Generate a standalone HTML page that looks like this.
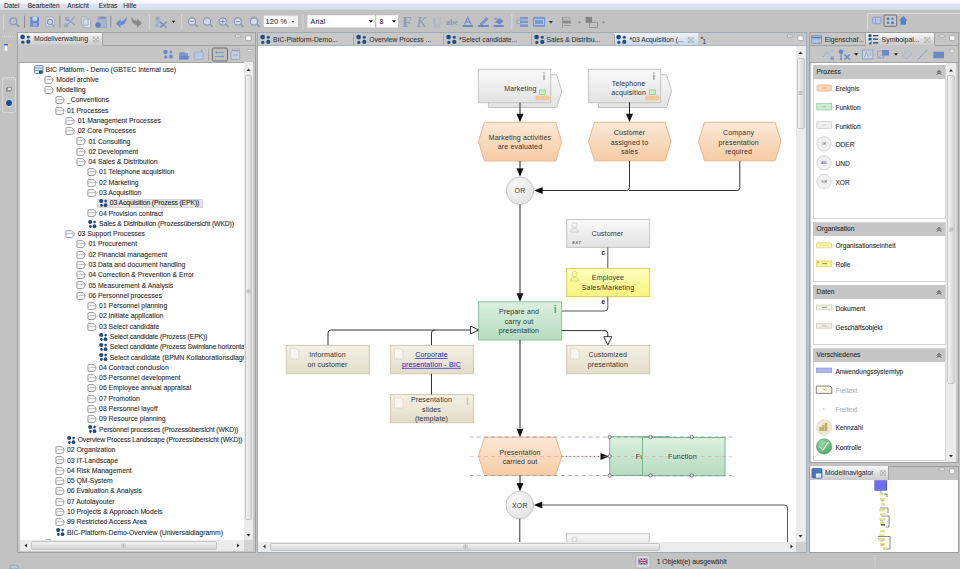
<!DOCTYPE html><html><head><meta charset="utf-8"><style>
*{margin:0;padding:0;box-sizing:border-box}
html,body{width:960px;height:569px;overflow:hidden;background:#c2c2c2;font-family:"Liberation Sans",sans-serif;color:#222}
.abs{position:absolute}
.t{position:absolute;white-space:nowrap;line-height:1;-webkit-text-stroke-width:0.09px}
svg{position:absolute;overflow:visible}
</style></head><body>
<div class="abs" style="left:0;top:0;width:960px;height:10px;background:linear-gradient(#fdfeff,#f4f6fb 30%,#dfe2f1 45%,#d9ddef 90%,#cfd2dc)"></div>
<div class="t" style="left:4px;top:2.8px;font-size:6.6px;color:#2a2a2a;-webkit-text-stroke-width:0.05px">Datei</div>
<div class="t" style="left:27.7px;top:2.8px;font-size:6.6px;color:#2a2a2a;-webkit-text-stroke-width:0.05px">Bearbeiten</div>
<div class="t" style="left:67.3px;top:2.8px;font-size:6.6px;color:#2a2a2a;-webkit-text-stroke-width:0.05px">Ansicht</div>
<div class="t" style="left:98.7px;top:2.8px;font-size:6.6px;color:#2a2a2a;-webkit-text-stroke-width:0.05px">Extras</div>
<div class="t" style="left:123.3px;top:2.8px;font-size:6.6px;color:#2a2a2a;-webkit-text-stroke-width:0.05px">Hilfe</div>
<div class="abs" style="left:0;top:10px;width:960px;height:22px;background:#c2c2c2"></div>
<svg style="left:0;top:0" width="960" height="34" viewBox="0 0 960 34"><path d="M3.6 14.5 V30" stroke="#eeeeee" stroke-width="1" stroke-dasharray="1 1.2"/><path d="M149.4 14.5 V30" stroke="#eeeeee" stroke-width="1" stroke-dasharray="1 1.2"/><path d="M181.7 14.5 V30" stroke="#eeeeee" stroke-width="1" stroke-dasharray="1 1.2"/><path d="M303 14.5 V30" stroke="#eeeeee" stroke-width="1" stroke-dasharray="1 1.2"/><path d="M511.9 14.5 V30" stroke="#eeeeee" stroke-width="1" stroke-dasharray="1 1.2"/><path d="M24.5 15.7 V27.7" stroke="#8a8a8a" stroke-width="0.9"/><path d="M59.9 15.7 V27.7" stroke="#8a8a8a" stroke-width="0.9"/><path d="M110.8 15.7 V27.7" stroke="#8a8a8a" stroke-width="0.9"/><circle cx="13.4" cy="21.3" r="3.4" fill="none" stroke="#8d9ab5" stroke-width="1.3"/><path d="M15.8 23.8 L19.3 26.6" stroke="#8d9ab5" stroke-width="1.8"/><path d="M30.2 16.8 H39 V26.7 H30.2 Z" fill="#6c8ccc"/><rect x="32.5" y="17" width="4.6" height="3.6" fill="#c8d4ec"/><rect x="33" y="23" width="4" height="3" fill="#90a8d8"/><path d="M45.8 16.8 H52 L54.7 19.5 V26.7 H45.8 Z" fill="#d4d8e0" stroke="#9aa6c0" stroke-width="0.7"/><circle cx="50" cy="22" r="2.6" fill="none" stroke="#8a98b8" stroke-width="1.1"/><path d="M51.8 24 L54.2 26.6" stroke="#8a98b8" stroke-width="1.2"/><path d="M66 26 L74.5 17 M66 18.5 L75 25" stroke="#8fa0c8" stroke-width="1.1"/><circle cx="66" cy="25.5" r="1.6" fill="none" stroke="#8fa0c8" stroke-width="1"/><circle cx="67" cy="19" r="1.6" fill="none" stroke="#8fa0c8" stroke-width="1"/><path d="M81.3 17 H87 L88 18 V25 H81.3 Z M83.3 19 H89 L90.6 20.6 V27.7 H83.3 Z" fill="#d8dce4" stroke="#9ca8bc" stroke-width="0.8"/><rect x="98" y="17" width="8.7" height="10.5" fill="#a8b4c8" stroke="#8c9ab4" stroke-width="0.6"/><rect x="99.5" y="16.8" width="6" height="2.2" fill="#7890c0"/><circle cx="98" cy="25" r="2.7" fill="#5a80c8"/><path d="M116 23.5 L120.5 19 V21.5 Q124 21 127 16.8 Q126.5 25 120.5 25.5 V28 Z" fill="#6a8cd0"/><path d="M142 23 L137 18.5 V21 Q133.5 20.5 131 17 Q132 25 137 25 V27.8 Z" fill="#8a8a8a"/><g opacity="0.85"><rect x="155.5" y="16.8" width="4" height="3" fill="#8aa0c8"/><rect x="156" y="20.5" width="5" height="3" fill="#9ab0d0"/><rect x="155" y="24" width="3.5" height="3" fill="#9ab0d0"/><path d="M160 22 L166.5 27.5 M166.5 22 L160 27.5" stroke="#6a88c0" stroke-width="1.6"/></g><path d="M171.8 20.7 H175.2 L173.5 22.9 Z" fill="#111"/><circle cx="192" cy="21.5" r="3.6" fill="#d8dcea" stroke="#8d9ab5" stroke-width="1.2"/><path d="M194.6 24 L197.8 26.9" stroke="#8d9ab5" stroke-width="1.6"/><path d="M189.8 21.5 H194.2" stroke="#8d9ab5" stroke-width="1"/><circle cx="207" cy="21.5" r="3.6" fill="#d8dcea" stroke="#8d9ab5" stroke-width="1.2"/><path d="M209.6 24 L212.8 26.9" stroke="#8d9ab5" stroke-width="1.6"/><rect x="203" y="17" width="4" height="3" fill="none" stroke="#aab" stroke-width="0.5"/><circle cx="222.75" cy="21.5" r="3.6" fill="#d8dcea" stroke="#8d9ab5" stroke-width="1.2"/><path d="M225.35 24 L228.55 26.9" stroke="#8d9ab5" stroke-width="1.6"/><path d="M220.7 21.5 H224.7 M222.7 19.5 V23.5" stroke="#7d8aa5" stroke-width="1"/><circle cx="237.75" cy="21.5" r="3.6" fill="#d8dcea" stroke="#8d9ab5" stroke-width="1.2"/><path d="M240.35 24 L243.55 26.9" stroke="#8d9ab5" stroke-width="1.6"/><path d="M235.7 21.5 H239.7" stroke="#7d8aa5" stroke-width="1"/><circle cx="254" cy="21.5" r="3.6" fill="#d8dcea" stroke="#8d9ab5" stroke-width="1.2"/><path d="M256.6 24 L259.8 26.9" stroke="#8d9ab5" stroke-width="1.6"/><text x="254" y="19" font-size="3.5" fill="#99a" text-anchor="middle" font-family="Liberation Sans">100</text><rect x="263.75" y="15.6" width="24.5" height="11.3" fill="#fff"/><rect x="288" y="15.6" width="10" height="11.3" fill="#f0f0f0"/><path d="M291.5 21.3 H294.5 L293 22.8 Z" fill="#222"/><rect x="307.5" y="15.25" width="67.5" height="12.25" fill="#fff"/><path d="M368.75 20.3 H373 L370.9 22.8 Z" fill="#111"/><rect x="376.25" y="15.25" width="21.75" height="12.25" fill="#fff"/><path d="M392 20.3 H396 L394 22.8 Z" fill="#111"/><text x="402.3" y="26.9" font-family="Liberation Serif" font-weight="bold" font-size="15.5" fill="#8a9ab8">F</text><text x="416.5" y="26.9" font-family="Liberation Serif" font-style="italic" font-size="15" fill="#8a9ab8">K</text><text x="432.3" y="26" font-family="Liberation Serif" font-size="13" fill="#a4aec4">U</text><path d="M433 27.2 H441" stroke="#a4aec4" stroke-width="0.7"/><text x="446" y="25" font-family="Liberation Serif" font-weight="bold" font-size="8" fill="#8a9ab8">abc</text><path d="M446 22.4 H458" stroke="#8a9ab8" stroke-width="0.6"/><path d="M464.5 24.3 L467.75 17.3 L471 24.3 M465.6 22 H469.9" fill="none" stroke="#7088c0" stroke-width="1.1"/><rect x="462.5" y="25" width="10.5" height="2" fill="#6a88c8"/><path d="M479.5 24 L486.5 17 L488.5 19 L481.5 26 Z" fill="#7890c8"/><rect x="478" y="25" width="10.75" height="2" fill="#6a88c8"/><path d="M495 22 L499 18 L503.5 21 L500 24.5 Z" fill="#6a88c8"/><path d="M497 19 Q495 17.5 494.5 20" stroke="#6a88c8" fill="none" stroke-width="1"/><rect x="493.75" y="25" width="10" height="2" fill="#6a88c8"/><rect x="520" y="16.9" width="8" height="2.5" fill="#7a98d0"/><rect x="520" y="20.6" width="8" height="2.5" fill="#7a98d0"/><rect x="520" y="24.4" width="8" height="2.5" fill="#7a98d0"/><rect x="517" y="20" width="3.5" height="3.5" fill="none" stroke="#7a98d0" stroke-width="0.6"/><rect x="533" y="16.9" width="12" height="10" fill="#7a98d0"/><rect x="534.5" y="19.5" width="9" height="5" fill="none" stroke="#c0d0f0" stroke-width="0.8"/><path d="M548.75 21.3 H553 L550.9 23.3 Z" fill="#111"/><rect x="563" y="17.5" width="7" height="2.5" fill="none" stroke="#999" stroke-width="0.6"/><rect x="563" y="20.8" width="8" height="2.6" fill="#888"/><path d="M563 25.5 H571 M562.5 17 V28" stroke="#888" stroke-width="0.7"/><path d="M578 21.7 H581 L579.5 23.2 Z" fill="#777"/><rect x="585.6" y="16.9" width="6.5" height="6" fill="#858585"/><rect x="589.5" y="22.3" width="8" height="5.2" fill="none" stroke="#888" stroke-width="0.8"/><path d="M602 21.7 H605 L603.5 23.2 Z" fill="#777"/><path d="M867.5 13.5 V30 M867.5 13.5 H960" stroke="#e2e2e2" stroke-width="0.8"/><rect x="872.5" y="17.2" width="8.5" height="6.6" rx="1.2" fill="#b8c4e0" stroke="#8090c0" stroke-width="0.8"/><path d="M875.5 17.5 V23.5" stroke="#8090c0" stroke-width="0.8"/><rect x="884" y="15" width="12.7" height="11.3" rx="1" fill="#c8c8c8" stroke="#666" stroke-width="0.9"/><circle cx="888" cy="18.7" r="1.5" fill="#5a7ac0"/><circle cx="892.5" cy="18.7" r="1.2" fill="#5a7ac0"/><circle cx="888" cy="22.8" r="1.3" fill="#5a7ac0"/><circle cx="892.5" cy="22.8" r="1.5" fill="#5a7ac0"/><path d="M899 20.5 L903.2 16 L907.5 20.5 H906 V24.7 H900.5 V20.5 Z" fill="#5a80c8"/></svg>
<div class="t" style="left:265.6px;top:17.6px;font-size:7.6px;color:#222;-webkit-text-stroke-width:0.03px">120 %</div>
<div class="t" style="left:310.6px;top:17.8px;font-size:7.2px;color:#222;-webkit-text-stroke-width:0.03px">Arial</div>
<div class="t" style="left:379.4px;top:17.8px;font-size:7.2px;color:#222;-webkit-text-stroke-width:0.03px">8</div>
<div class="abs" style="left:2px;top:77px;width:14px;height:36px;border:1px solid #d8d8d8;border-radius:2px"></div>
<div class="abs" style="left:5.5px;top:100px;width:6px;height:6px;border-radius:50%;background:#1f4f8a;box-shadow:0 0 1.5px 1px #c8d8ec"></div>
<div class="abs" style="left:17px;top:32px;width:239px;height:521px;border:1px solid #a0a0a0;background:#c6c6c6"></div>
<div class="abs" style="left:18px;top:33px;width:85px;height:12px;background:linear-gradient(#f8f8f8,#cbcbcb);border-right:1px solid #a0a0a0"></div>
<div class="abs" style="left:103px;top:45px;width:152px;height:1px;background:#a0a0a0"></div>
<div class="t" style="left:34px;top:36.2px;font-size:6.95px;color:#333;-webkit-text-stroke-width:0.06px">Modellverwaltung</div>
<div class="abs" style="left:19px;top:62px;width:235px;height:1px;background:#a4a4a4"></div><div class="abs" style="left:20px;top:63px;width:233px;height:478px;background:#fff"></div>
<div class="abs" style="left:20px;top:62px;width:224px;height:478px;overflow:hidden">
<svg style="left:13.6px;top:3.0px" width="10" height="9" viewBox="0 0 10 9"><rect x="0.5" y="0.5" width="8.5" height="8" rx="1" fill="#dfe8f0" stroke="#5b82a8" stroke-width="0.9"/><path d="M0.8 3h8M0.8 5.5h8" stroke="#5b82a8" stroke-width="0.8"/><rect x="5" y="5.8" width="3.5" height="2.5" fill="#1f4f8a"/></svg>
<div class="t" style="left:25.6px;top:4.5px;font-size:6.85px;color:#2a2a2a;letter-spacing:0">BIC Platform - Demo (GBTEC internal use)</div>
<svg style="left:23.9px;top:13.6px" width="10" height="8" viewBox="0 0 10 8"><path d="M0.9 1.8 Q0.9 0.6 2.1 0.6 H6.4 Q7.2 0.6 7.8 1.6 L9.2 3.6 Q8.6 6 7.6 7.1 Q7.2 7.5 6.4 7.5 H2.1 Q0.9 7.5 0.9 6.3 Z" fill="#f8f8fa" stroke="#8a8c94" stroke-width="0.85"/><path d="M1.2 4.6 Q2 3.5 3.5 3.5 H9" fill="none" stroke="#9a9ea8" stroke-width="0.6"/></svg>
<div class="t" style="left:36.3px;top:14.7px;font-size:6.85px;color:#2a2a2a;letter-spacing:0">Model archive</div>
<svg style="left:23.9px;top:23.9px" width="10" height="8" viewBox="0 0 10 8"><path d="M0.9 1.8 Q0.9 0.6 2.1 0.6 H6.4 Q7.2 0.6 7.8 1.6 L9.2 3.6 Q8.6 6 7.6 7.1 Q7.2 7.5 6.4 7.5 H2.1 Q0.9 7.5 0.9 6.3 Z" fill="#f8f8fa" stroke="#8a8c94" stroke-width="0.85"/><path d="M1.2 4.6 Q2 3.5 3.5 3.5 H9" fill="none" stroke="#9a9ea8" stroke-width="0.6"/></svg>
<div class="t" style="left:36.3px;top:25.0px;font-size:6.85px;color:#2a2a2a;letter-spacing:0">Modelling</div>
<svg style="left:34.6px;top:34.2px" width="10" height="8" viewBox="0 0 10 8"><path d="M0.9 1.8 Q0.9 0.6 2.1 0.6 H6.4 Q7.2 0.6 7.8 1.6 L9.2 3.6 Q8.6 6 7.6 7.1 Q7.2 7.5 6.4 7.5 H2.1 Q0.9 7.5 0.9 6.3 Z" fill="#f8f8fa" stroke="#8a8c94" stroke-width="0.85"/><path d="M1.2 4.6 Q2 3.5 3.5 3.5 H9" fill="none" stroke="#9a9ea8" stroke-width="0.6"/></svg>
<div class="t" style="left:47.0px;top:35.3px;font-size:6.85px;color:#2a2a2a;letter-spacing:0">_Conventions</div>
<svg style="left:34.6px;top:44.5px" width="10" height="8" viewBox="0 0 10 8"><path d="M0.9 1.8 Q0.9 0.6 2.1 0.6 H6.4 Q7.2 0.6 7.8 1.6 L9.2 3.6 Q8.6 6 7.6 7.1 Q7.2 7.5 6.4 7.5 H2.1 Q0.9 7.5 0.9 6.3 Z" fill="#f8f8fa" stroke="#8a8c94" stroke-width="0.85"/><path d="M1.2 4.6 Q2 3.5 3.5 3.5 H9" fill="none" stroke="#9a9ea8" stroke-width="0.6"/></svg>
<div class="t" style="left:47.0px;top:45.6px;font-size:6.85px;color:#2a2a2a;letter-spacing:0">01 Processes</div>
<svg style="left:45.3px;top:54.7px" width="10" height="8" viewBox="0 0 10 8"><path d="M0.9 1.8 Q0.9 0.6 2.1 0.6 H6.4 Q7.2 0.6 7.8 1.6 L9.2 3.6 Q8.6 6 7.6 7.1 Q7.2 7.5 6.4 7.5 H2.1 Q0.9 7.5 0.9 6.3 Z" fill="#f8f8fa" stroke="#8a8c94" stroke-width="0.85"/><path d="M1.2 4.6 Q2 3.5 3.5 3.5 H9" fill="none" stroke="#9a9ea8" stroke-width="0.6"/></svg>
<div class="t" style="left:57.7px;top:55.9px;font-size:6.85px;color:#2a2a2a;letter-spacing:0">01 Management Processes</div>
<svg style="left:45.3px;top:65.0px" width="10" height="8" viewBox="0 0 10 8"><path d="M0.9 1.8 Q0.9 0.6 2.1 0.6 H6.4 Q7.2 0.6 7.8 1.6 L9.2 3.6 Q8.6 6 7.6 7.1 Q7.2 7.5 6.4 7.5 H2.1 Q0.9 7.5 0.9 6.3 Z" fill="#f8f8fa" stroke="#8a8c94" stroke-width="0.85"/><path d="M1.2 4.6 Q2 3.5 3.5 3.5 H9" fill="none" stroke="#9a9ea8" stroke-width="0.6"/></svg>
<div class="t" style="left:57.7px;top:66.2px;font-size:6.85px;color:#2a2a2a;letter-spacing:0">02 Core Processes</div>
<svg style="left:56.0px;top:75.3px" width="10" height="8" viewBox="0 0 10 8"><path d="M0.9 1.8 Q0.9 0.6 2.1 0.6 H6.4 Q7.2 0.6 7.8 1.6 L9.2 3.6 Q8.6 6 7.6 7.1 Q7.2 7.5 6.4 7.5 H2.1 Q0.9 7.5 0.9 6.3 Z" fill="#f8f8fa" stroke="#8a8c94" stroke-width="0.85"/><path d="M1.2 4.6 Q2 3.5 3.5 3.5 H9" fill="none" stroke="#9a9ea8" stroke-width="0.6"/></svg>
<div class="t" style="left:68.4px;top:76.5px;font-size:6.85px;color:#2a2a2a;letter-spacing:0">01 Consulting</div>
<svg style="left:56.0px;top:85.6px" width="10" height="8" viewBox="0 0 10 8"><path d="M0.9 1.8 Q0.9 0.6 2.1 0.6 H6.4 Q7.2 0.6 7.8 1.6 L9.2 3.6 Q8.6 6 7.6 7.1 Q7.2 7.5 6.4 7.5 H2.1 Q0.9 7.5 0.9 6.3 Z" fill="#f8f8fa" stroke="#8a8c94" stroke-width="0.85"/><path d="M1.2 4.6 Q2 3.5 3.5 3.5 H9" fill="none" stroke="#9a9ea8" stroke-width="0.6"/></svg>
<div class="t" style="left:68.4px;top:86.8px;font-size:6.85px;color:#2a2a2a;letter-spacing:0">02 Development</div>
<svg style="left:56.0px;top:95.9px" width="10" height="8" viewBox="0 0 10 8"><path d="M0.9 1.8 Q0.9 0.6 2.1 0.6 H6.4 Q7.2 0.6 7.8 1.6 L9.2 3.6 Q8.6 6 7.6 7.1 Q7.2 7.5 6.4 7.5 H2.1 Q0.9 7.5 0.9 6.3 Z" fill="#f8f8fa" stroke="#8a8c94" stroke-width="0.85"/><path d="M1.2 4.6 Q2 3.5 3.5 3.5 H9" fill="none" stroke="#9a9ea8" stroke-width="0.6"/></svg>
<div class="t" style="left:68.4px;top:97.1px;font-size:6.85px;color:#2a2a2a;letter-spacing:0">04 Sales &amp; Distribution</div>
<svg style="left:66.7px;top:106.2px" width="10" height="8" viewBox="0 0 10 8"><path d="M0.9 1.8 Q0.9 0.6 2.1 0.6 H6.4 Q7.2 0.6 7.8 1.6 L9.2 3.6 Q8.6 6 7.6 7.1 Q7.2 7.5 6.4 7.5 H2.1 Q0.9 7.5 0.9 6.3 Z" fill="#f8f8fa" stroke="#8a8c94" stroke-width="0.85"/><path d="M1.2 4.6 Q2 3.5 3.5 3.5 H9" fill="none" stroke="#9a9ea8" stroke-width="0.6"/></svg>
<div class="t" style="left:79.1px;top:107.3px;font-size:6.85px;color:#2a2a2a;letter-spacing:0">01 Telephone acquisition</div>
<svg style="left:66.7px;top:116.5px" width="10" height="8" viewBox="0 0 10 8"><path d="M0.9 1.8 Q0.9 0.6 2.1 0.6 H6.4 Q7.2 0.6 7.8 1.6 L9.2 3.6 Q8.6 6 7.6 7.1 Q7.2 7.5 6.4 7.5 H2.1 Q0.9 7.5 0.9 6.3 Z" fill="#f8f8fa" stroke="#8a8c94" stroke-width="0.85"/><path d="M1.2 4.6 Q2 3.5 3.5 3.5 H9" fill="none" stroke="#9a9ea8" stroke-width="0.6"/></svg>
<div class="t" style="left:79.1px;top:117.6px;font-size:6.85px;color:#2a2a2a;letter-spacing:0">02 Marketing</div>
<svg style="left:66.7px;top:126.8px" width="10" height="8" viewBox="0 0 10 8"><path d="M0.9 1.8 Q0.9 0.6 2.1 0.6 H6.4 Q7.2 0.6 7.8 1.6 L9.2 3.6 Q8.6 6 7.6 7.1 Q7.2 7.5 6.4 7.5 H2.1 Q0.9 7.5 0.9 6.3 Z" fill="#f8f8fa" stroke="#8a8c94" stroke-width="0.85"/><path d="M1.2 4.6 Q2 3.5 3.5 3.5 H9" fill="none" stroke="#9a9ea8" stroke-width="0.6"/></svg>
<div class="t" style="left:79.1px;top:127.9px;font-size:6.85px;color:#2a2a2a;letter-spacing:0">03 Acquisition</div>
<div class="abs" style="left:76.8px;top:136.7px;width:106px;height:9px;background:#e4e4e4;border:1px solid #d8d8d8"></div>
<svg style="left:78.8px;top:137.1px" width="9" height="8.5" viewBox="0 0 9 8.5"><circle cx="2.2" cy="2.0" r="2.1" fill="#1f4a80"/><circle cx="6.6" cy="2.1" r="1.3" fill="#1f4a80"/><circle cx="2.4" cy="6.5" r="1.4" fill="#1f4a80"/><circle cx="6.5" cy="6.2" r="1.9" fill="#1f4a80"/></svg>
<div class="t" style="left:89.8px;top:138.2px;font-size:6.85px;color:#2a2a2a;letter-spacing:-0.14px">03 Acquisition (Prozess (EPK))</div>
<svg style="left:66.7px;top:147.4px" width="10" height="8" viewBox="0 0 10 8"><path d="M0.9 1.8 Q0.9 0.6 2.1 0.6 H6.4 Q7.2 0.6 7.8 1.6 L9.2 3.6 Q8.6 6 7.6 7.1 Q7.2 7.5 6.4 7.5 H2.1 Q0.9 7.5 0.9 6.3 Z" fill="#f8f8fa" stroke="#8a8c94" stroke-width="0.85"/><path d="M1.2 4.6 Q2 3.5 3.5 3.5 H9" fill="none" stroke="#9a9ea8" stroke-width="0.6"/></svg>
<div class="t" style="left:79.1px;top:148.5px;font-size:6.85px;color:#2a2a2a;letter-spacing:0">04 Provision contract</div>
<svg style="left:68.1px;top:157.7px" width="9" height="8.5" viewBox="0 0 9 8.5"><circle cx="2.2" cy="2.0" r="2.1" fill="#1f4a80"/><circle cx="6.6" cy="2.1" r="1.3" fill="#1f4a80"/><circle cx="2.4" cy="6.5" r="1.4" fill="#1f4a80"/><circle cx="6.5" cy="6.2" r="1.9" fill="#1f4a80"/></svg>
<div class="t" style="left:79.1px;top:158.8px;font-size:6.85px;color:#2a2a2a;letter-spacing:-0.14px">Sales &amp; Distribution (Prozessübersicht (WKD))</div>
<svg style="left:45.3px;top:167.9px" width="10" height="8" viewBox="0 0 10 8"><path d="M0.9 1.8 Q0.9 0.6 2.1 0.6 H6.4 Q7.2 0.6 7.8 1.6 L9.2 3.6 Q8.6 6 7.6 7.1 Q7.2 7.5 6.4 7.5 H2.1 Q0.9 7.5 0.9 6.3 Z" fill="#f8f8fa" stroke="#8a8c94" stroke-width="0.85"/><path d="M1.2 4.6 Q2 3.5 3.5 3.5 H9" fill="none" stroke="#9a9ea8" stroke-width="0.6"/></svg>
<div class="t" style="left:57.7px;top:169.1px;font-size:6.85px;color:#2a2a2a;letter-spacing:0">03 Support Processes</div>
<svg style="left:56.0px;top:178.2px" width="10" height="8" viewBox="0 0 10 8"><path d="M0.9 1.8 Q0.9 0.6 2.1 0.6 H6.4 Q7.2 0.6 7.8 1.6 L9.2 3.6 Q8.6 6 7.6 7.1 Q7.2 7.5 6.4 7.5 H2.1 Q0.9 7.5 0.9 6.3 Z" fill="#f8f8fa" stroke="#8a8c94" stroke-width="0.85"/><path d="M1.2 4.6 Q2 3.5 3.5 3.5 H9" fill="none" stroke="#9a9ea8" stroke-width="0.6"/></svg>
<div class="t" style="left:68.4px;top:179.4px;font-size:6.85px;color:#2a2a2a;letter-spacing:0">01 Procurement</div>
<svg style="left:56.0px;top:188.5px" width="10" height="8" viewBox="0 0 10 8"><path d="M0.9 1.8 Q0.9 0.6 2.1 0.6 H6.4 Q7.2 0.6 7.8 1.6 L9.2 3.6 Q8.6 6 7.6 7.1 Q7.2 7.5 6.4 7.5 H2.1 Q0.9 7.5 0.9 6.3 Z" fill="#f8f8fa" stroke="#8a8c94" stroke-width="0.85"/><path d="M1.2 4.6 Q2 3.5 3.5 3.5 H9" fill="none" stroke="#9a9ea8" stroke-width="0.6"/></svg>
<div class="t" style="left:68.4px;top:189.7px;font-size:6.85px;color:#2a2a2a;letter-spacing:0">02 Financial management</div>
<svg style="left:56.0px;top:198.8px" width="10" height="8" viewBox="0 0 10 8"><path d="M0.9 1.8 Q0.9 0.6 2.1 0.6 H6.4 Q7.2 0.6 7.8 1.6 L9.2 3.6 Q8.6 6 7.6 7.1 Q7.2 7.5 6.4 7.5 H2.1 Q0.9 7.5 0.9 6.3 Z" fill="#f8f8fa" stroke="#8a8c94" stroke-width="0.85"/><path d="M1.2 4.6 Q2 3.5 3.5 3.5 H9" fill="none" stroke="#9a9ea8" stroke-width="0.6"/></svg>
<div class="t" style="left:68.4px;top:200.0px;font-size:6.85px;color:#2a2a2a;letter-spacing:0">03 Data and document handling</div>
<svg style="left:56.0px;top:209.1px" width="10" height="8" viewBox="0 0 10 8"><path d="M0.9 1.8 Q0.9 0.6 2.1 0.6 H6.4 Q7.2 0.6 7.8 1.6 L9.2 3.6 Q8.6 6 7.6 7.1 Q7.2 7.5 6.4 7.5 H2.1 Q0.9 7.5 0.9 6.3 Z" fill="#f8f8fa" stroke="#8a8c94" stroke-width="0.85"/><path d="M1.2 4.6 Q2 3.5 3.5 3.5 H9" fill="none" stroke="#9a9ea8" stroke-width="0.6"/></svg>
<div class="t" style="left:68.4px;top:210.2px;font-size:6.85px;color:#2a2a2a;letter-spacing:0">04 Correction &amp; Prevention &amp; Error</div>
<svg style="left:56.0px;top:219.4px" width="10" height="8" viewBox="0 0 10 8"><path d="M0.9 1.8 Q0.9 0.6 2.1 0.6 H6.4 Q7.2 0.6 7.8 1.6 L9.2 3.6 Q8.6 6 7.6 7.1 Q7.2 7.5 6.4 7.5 H2.1 Q0.9 7.5 0.9 6.3 Z" fill="#f8f8fa" stroke="#8a8c94" stroke-width="0.85"/><path d="M1.2 4.6 Q2 3.5 3.5 3.5 H9" fill="none" stroke="#9a9ea8" stroke-width="0.6"/></svg>
<div class="t" style="left:68.4px;top:220.5px;font-size:6.85px;color:#2a2a2a;letter-spacing:0">05 Measurement &amp; Analysis</div>
<svg style="left:56.0px;top:229.7px" width="10" height="8" viewBox="0 0 10 8"><path d="M0.9 1.8 Q0.9 0.6 2.1 0.6 H6.4 Q7.2 0.6 7.8 1.6 L9.2 3.6 Q8.6 6 7.6 7.1 Q7.2 7.5 6.4 7.5 H2.1 Q0.9 7.5 0.9 6.3 Z" fill="#f8f8fa" stroke="#8a8c94" stroke-width="0.85"/><path d="M1.2 4.6 Q2 3.5 3.5 3.5 H9" fill="none" stroke="#9a9ea8" stroke-width="0.6"/></svg>
<div class="t" style="left:68.4px;top:230.8px;font-size:6.85px;color:#2a2a2a;letter-spacing:0">06 Personnel processes</div>
<svg style="left:66.7px;top:240.0px" width="10" height="8" viewBox="0 0 10 8"><path d="M0.9 1.8 Q0.9 0.6 2.1 0.6 H6.4 Q7.2 0.6 7.8 1.6 L9.2 3.6 Q8.6 6 7.6 7.1 Q7.2 7.5 6.4 7.5 H2.1 Q0.9 7.5 0.9 6.3 Z" fill="#f8f8fa" stroke="#8a8c94" stroke-width="0.85"/><path d="M1.2 4.6 Q2 3.5 3.5 3.5 H9" fill="none" stroke="#9a9ea8" stroke-width="0.6"/></svg>
<div class="t" style="left:79.1px;top:241.1px;font-size:6.85px;color:#2a2a2a;letter-spacing:0">01 Personnel planning</div>
<svg style="left:66.7px;top:250.3px" width="10" height="8" viewBox="0 0 10 8"><path d="M0.9 1.8 Q0.9 0.6 2.1 0.6 H6.4 Q7.2 0.6 7.8 1.6 L9.2 3.6 Q8.6 6 7.6 7.1 Q7.2 7.5 6.4 7.5 H2.1 Q0.9 7.5 0.9 6.3 Z" fill="#f8f8fa" stroke="#8a8c94" stroke-width="0.85"/><path d="M1.2 4.6 Q2 3.5 3.5 3.5 H9" fill="none" stroke="#9a9ea8" stroke-width="0.6"/></svg>
<div class="t" style="left:79.1px;top:251.4px;font-size:6.85px;color:#2a2a2a;letter-spacing:0">02 Initiate application</div>
<svg style="left:66.7px;top:260.6px" width="10" height="8" viewBox="0 0 10 8"><path d="M0.9 1.8 Q0.9 0.6 2.1 0.6 H6.4 Q7.2 0.6 7.8 1.6 L9.2 3.6 Q8.6 6 7.6 7.1 Q7.2 7.5 6.4 7.5 H2.1 Q0.9 7.5 0.9 6.3 Z" fill="#f8f8fa" stroke="#8a8c94" stroke-width="0.85"/><path d="M1.2 4.6 Q2 3.5 3.5 3.5 H9" fill="none" stroke="#9a9ea8" stroke-width="0.6"/></svg>
<div class="t" style="left:79.1px;top:261.7px;font-size:6.85px;color:#2a2a2a;letter-spacing:0">03 Select candidate</div>
<svg style="left:78.8px;top:270.8px" width="9" height="8.5" viewBox="0 0 9 8.5"><circle cx="2.2" cy="2.0" r="2.1" fill="#1f4a80"/><circle cx="6.6" cy="2.1" r="1.3" fill="#1f4a80"/><circle cx="2.4" cy="6.5" r="1.4" fill="#1f4a80"/><circle cx="6.5" cy="6.2" r="1.9" fill="#1f4a80"/></svg>
<div class="t" style="left:89.8px;top:272.0px;font-size:6.85px;color:#2a2a2a;letter-spacing:-0.14px">Select candidate (Prozess (EPK))</div>
<svg style="left:78.8px;top:281.1px" width="9" height="8.5" viewBox="0 0 9 8.5"><circle cx="2.2" cy="2.0" r="2.1" fill="#1f4a80"/><circle cx="6.6" cy="2.1" r="1.3" fill="#1f4a80"/><circle cx="2.4" cy="6.5" r="1.4" fill="#1f4a80"/><circle cx="6.5" cy="6.2" r="1.9" fill="#1f4a80"/></svg>
<div class="t" style="left:89.8px;top:282.3px;font-size:6.85px;color:#2a2a2a;letter-spacing:-0.14px">Select candidate (Prozess Swimlane horizontal)</div>
<svg style="left:78.8px;top:291.4px" width="9" height="8.5" viewBox="0 0 9 8.5"><circle cx="2.2" cy="2.0" r="2.1" fill="#1f4a80"/><circle cx="6.6" cy="2.1" r="1.3" fill="#1f4a80"/><circle cx="2.4" cy="6.5" r="1.4" fill="#1f4a80"/><circle cx="6.5" cy="6.2" r="1.9" fill="#1f4a80"/></svg>
<div class="t" style="left:89.8px;top:292.6px;font-size:6.85px;color:#2a2a2a;letter-spacing:0">Select candidate (BPMN Kollaborationsdiagramm)</div>
<svg style="left:66.7px;top:301.7px" width="10" height="8" viewBox="0 0 10 8"><path d="M0.9 1.8 Q0.9 0.6 2.1 0.6 H6.4 Q7.2 0.6 7.8 1.6 L9.2 3.6 Q8.6 6 7.6 7.1 Q7.2 7.5 6.4 7.5 H2.1 Q0.9 7.5 0.9 6.3 Z" fill="#f8f8fa" stroke="#8a8c94" stroke-width="0.85"/><path d="M1.2 4.6 Q2 3.5 3.5 3.5 H9" fill="none" stroke="#9a9ea8" stroke-width="0.6"/></svg>
<div class="t" style="left:79.1px;top:302.9px;font-size:6.85px;color:#2a2a2a;letter-spacing:0">04 Contract conclusion</div>
<svg style="left:66.7px;top:312.0px" width="10" height="8" viewBox="0 0 10 8"><path d="M0.9 1.8 Q0.9 0.6 2.1 0.6 H6.4 Q7.2 0.6 7.8 1.6 L9.2 3.6 Q8.6 6 7.6 7.1 Q7.2 7.5 6.4 7.5 H2.1 Q0.9 7.5 0.9 6.3 Z" fill="#f8f8fa" stroke="#8a8c94" stroke-width="0.85"/><path d="M1.2 4.6 Q2 3.5 3.5 3.5 H9" fill="none" stroke="#9a9ea8" stroke-width="0.6"/></svg>
<div class="t" style="left:79.1px;top:313.1px;font-size:6.85px;color:#2a2a2a;letter-spacing:0">05 Personnel development</div>
<svg style="left:66.7px;top:322.3px" width="10" height="8" viewBox="0 0 10 8"><path d="M0.9 1.8 Q0.9 0.6 2.1 0.6 H6.4 Q7.2 0.6 7.8 1.6 L9.2 3.6 Q8.6 6 7.6 7.1 Q7.2 7.5 6.4 7.5 H2.1 Q0.9 7.5 0.9 6.3 Z" fill="#f8f8fa" stroke="#8a8c94" stroke-width="0.85"/><path d="M1.2 4.6 Q2 3.5 3.5 3.5 H9" fill="none" stroke="#9a9ea8" stroke-width="0.6"/></svg>
<div class="t" style="left:79.1px;top:323.4px;font-size:6.85px;color:#2a2a2a;letter-spacing:0">06 Employee annual appraisal</div>
<svg style="left:66.7px;top:332.6px" width="10" height="8" viewBox="0 0 10 8"><path d="M0.9 1.8 Q0.9 0.6 2.1 0.6 H6.4 Q7.2 0.6 7.8 1.6 L9.2 3.6 Q8.6 6 7.6 7.1 Q7.2 7.5 6.4 7.5 H2.1 Q0.9 7.5 0.9 6.3 Z" fill="#f8f8fa" stroke="#8a8c94" stroke-width="0.85"/><path d="M1.2 4.6 Q2 3.5 3.5 3.5 H9" fill="none" stroke="#9a9ea8" stroke-width="0.6"/></svg>
<div class="t" style="left:79.1px;top:333.7px;font-size:6.85px;color:#2a2a2a;letter-spacing:0">07 Promotion</div>
<svg style="left:66.7px;top:342.9px" width="10" height="8" viewBox="0 0 10 8"><path d="M0.9 1.8 Q0.9 0.6 2.1 0.6 H6.4 Q7.2 0.6 7.8 1.6 L9.2 3.6 Q8.6 6 7.6 7.1 Q7.2 7.5 6.4 7.5 H2.1 Q0.9 7.5 0.9 6.3 Z" fill="#f8f8fa" stroke="#8a8c94" stroke-width="0.85"/><path d="M1.2 4.6 Q2 3.5 3.5 3.5 H9" fill="none" stroke="#9a9ea8" stroke-width="0.6"/></svg>
<div class="t" style="left:79.1px;top:344.0px;font-size:6.85px;color:#2a2a2a;letter-spacing:0">08 Personnel layoff</div>
<svg style="left:66.7px;top:353.2px" width="10" height="8" viewBox="0 0 10 8"><path d="M0.9 1.8 Q0.9 0.6 2.1 0.6 H6.4 Q7.2 0.6 7.8 1.6 L9.2 3.6 Q8.6 6 7.6 7.1 Q7.2 7.5 6.4 7.5 H2.1 Q0.9 7.5 0.9 6.3 Z" fill="#f8f8fa" stroke="#8a8c94" stroke-width="0.85"/><path d="M1.2 4.6 Q2 3.5 3.5 3.5 H9" fill="none" stroke="#9a9ea8" stroke-width="0.6"/></svg>
<div class="t" style="left:79.1px;top:354.3px;font-size:6.85px;color:#2a2a2a;letter-spacing:0">09 Resource planning</div>
<svg style="left:68.1px;top:363.4px" width="9" height="8.5" viewBox="0 0 9 8.5"><circle cx="2.2" cy="2.0" r="2.1" fill="#1f4a80"/><circle cx="6.6" cy="2.1" r="1.3" fill="#1f4a80"/><circle cx="2.4" cy="6.5" r="1.4" fill="#1f4a80"/><circle cx="6.5" cy="6.2" r="1.9" fill="#1f4a80"/></svg>
<div class="t" style="left:79.1px;top:364.6px;font-size:6.85px;color:#2a2a2a;letter-spacing:-0.14px">Personnel processes (Prozessübersicht (WKD))</div>
<svg style="left:46.7px;top:373.7px" width="9" height="8.5" viewBox="0 0 9 8.5"><circle cx="2.2" cy="2.0" r="2.1" fill="#1f4a80"/><circle cx="6.6" cy="2.1" r="1.3" fill="#1f4a80"/><circle cx="2.4" cy="6.5" r="1.4" fill="#1f4a80"/><circle cx="6.5" cy="6.2" r="1.9" fill="#1f4a80"/></svg>
<div class="t" style="left:57.7px;top:374.9px;font-size:6.85px;color:#2a2a2a;letter-spacing:-0.14px">Overview Process Landscape (Prozessübersicht (WKD))</div>
<svg style="left:34.6px;top:384.0px" width="10" height="8" viewBox="0 0 10 8"><path d="M0.9 1.8 Q0.9 0.6 2.1 0.6 H6.4 Q7.2 0.6 7.8 1.6 L9.2 3.6 Q8.6 6 7.6 7.1 Q7.2 7.5 6.4 7.5 H2.1 Q0.9 7.5 0.9 6.3 Z" fill="#f8f8fa" stroke="#8a8c94" stroke-width="0.85"/><path d="M1.2 4.6 Q2 3.5 3.5 3.5 H9" fill="none" stroke="#9a9ea8" stroke-width="0.6"/></svg>
<div class="t" style="left:47.0px;top:385.2px;font-size:6.85px;color:#2a2a2a;letter-spacing:0">02 Organization</div>
<svg style="left:34.6px;top:394.3px" width="10" height="8" viewBox="0 0 10 8"><path d="M0.9 1.8 Q0.9 0.6 2.1 0.6 H6.4 Q7.2 0.6 7.8 1.6 L9.2 3.6 Q8.6 6 7.6 7.1 Q7.2 7.5 6.4 7.5 H2.1 Q0.9 7.5 0.9 6.3 Z" fill="#f8f8fa" stroke="#8a8c94" stroke-width="0.85"/><path d="M1.2 4.6 Q2 3.5 3.5 3.5 H9" fill="none" stroke="#9a9ea8" stroke-width="0.6"/></svg>
<div class="t" style="left:47.0px;top:395.5px;font-size:6.85px;color:#2a2a2a;letter-spacing:0">03 IT-Landscape</div>
<svg style="left:34.6px;top:404.6px" width="10" height="8" viewBox="0 0 10 8"><path d="M0.9 1.8 Q0.9 0.6 2.1 0.6 H6.4 Q7.2 0.6 7.8 1.6 L9.2 3.6 Q8.6 6 7.6 7.1 Q7.2 7.5 6.4 7.5 H2.1 Q0.9 7.5 0.9 6.3 Z" fill="#f8f8fa" stroke="#8a8c94" stroke-width="0.85"/><path d="M1.2 4.6 Q2 3.5 3.5 3.5 H9" fill="none" stroke="#9a9ea8" stroke-width="0.6"/></svg>
<div class="t" style="left:47.0px;top:405.8px;font-size:6.85px;color:#2a2a2a;letter-spacing:0">04 Risk Management</div>
<svg style="left:34.6px;top:414.9px" width="10" height="8" viewBox="0 0 10 8"><path d="M0.9 1.8 Q0.9 0.6 2.1 0.6 H6.4 Q7.2 0.6 7.8 1.6 L9.2 3.6 Q8.6 6 7.6 7.1 Q7.2 7.5 6.4 7.5 H2.1 Q0.9 7.5 0.9 6.3 Z" fill="#f8f8fa" stroke="#8a8c94" stroke-width="0.85"/><path d="M1.2 4.6 Q2 3.5 3.5 3.5 H9" fill="none" stroke="#9a9ea8" stroke-width="0.6"/></svg>
<div class="t" style="left:47.0px;top:416.0px;font-size:6.85px;color:#2a2a2a;letter-spacing:0">05 QM-System</div>
<svg style="left:34.6px;top:425.2px" width="10" height="8" viewBox="0 0 10 8"><path d="M0.9 1.8 Q0.9 0.6 2.1 0.6 H6.4 Q7.2 0.6 7.8 1.6 L9.2 3.6 Q8.6 6 7.6 7.1 Q7.2 7.5 6.4 7.5 H2.1 Q0.9 7.5 0.9 6.3 Z" fill="#f8f8fa" stroke="#8a8c94" stroke-width="0.85"/><path d="M1.2 4.6 Q2 3.5 3.5 3.5 H9" fill="none" stroke="#9a9ea8" stroke-width="0.6"/></svg>
<div class="t" style="left:47.0px;top:426.3px;font-size:6.85px;color:#2a2a2a;letter-spacing:0">06 Evaluation &amp; Analysis</div>
<svg style="left:34.6px;top:435.5px" width="10" height="8" viewBox="0 0 10 8"><path d="M0.9 1.8 Q0.9 0.6 2.1 0.6 H6.4 Q7.2 0.6 7.8 1.6 L9.2 3.6 Q8.6 6 7.6 7.1 Q7.2 7.5 6.4 7.5 H2.1 Q0.9 7.5 0.9 6.3 Z" fill="#f8f8fa" stroke="#8a8c94" stroke-width="0.85"/><path d="M1.2 4.6 Q2 3.5 3.5 3.5 H9" fill="none" stroke="#9a9ea8" stroke-width="0.6"/></svg>
<div class="t" style="left:47.0px;top:436.6px;font-size:6.85px;color:#2a2a2a;letter-spacing:0">07 Autolayouter</div>
<svg style="left:34.6px;top:445.8px" width="10" height="8" viewBox="0 0 10 8"><path d="M0.9 1.8 Q0.9 0.6 2.1 0.6 H6.4 Q7.2 0.6 7.8 1.6 L9.2 3.6 Q8.6 6 7.6 7.1 Q7.2 7.5 6.4 7.5 H2.1 Q0.9 7.5 0.9 6.3 Z" fill="#f8f8fa" stroke="#8a8c94" stroke-width="0.85"/><path d="M1.2 4.6 Q2 3.5 3.5 3.5 H9" fill="none" stroke="#9a9ea8" stroke-width="0.6"/></svg>
<div class="t" style="left:47.0px;top:446.9px;font-size:6.85px;color:#2a2a2a;letter-spacing:0">10 Projects &amp; Approach Models</div>
<svg style="left:34.6px;top:456.1px" width="10" height="8" viewBox="0 0 10 8"><path d="M0.9 1.8 Q0.9 0.6 2.1 0.6 H6.4 Q7.2 0.6 7.8 1.6 L9.2 3.6 Q8.6 6 7.6 7.1 Q7.2 7.5 6.4 7.5 H2.1 Q0.9 7.5 0.9 6.3 Z" fill="#f8f8fa" stroke="#8a8c94" stroke-width="0.85"/><path d="M1.2 4.6 Q2 3.5 3.5 3.5 H9" fill="none" stroke="#9a9ea8" stroke-width="0.6"/></svg>
<div class="t" style="left:47.0px;top:457.2px;font-size:6.85px;color:#2a2a2a;letter-spacing:0">99 Restricted Access Area</div>
<svg style="left:36.0px;top:466.3px" width="9" height="8.5" viewBox="0 0 9 8.5"><circle cx="2.2" cy="2.0" r="2.1" fill="#1f4a80"/><circle cx="6.6" cy="2.1" r="1.3" fill="#1f4a80"/><circle cx="2.4" cy="6.5" r="1.4" fill="#1f4a80"/><circle cx="6.5" cy="6.2" r="1.9" fill="#1f4a80"/></svg>
<div class="t" style="left:47.0px;top:467.5px;font-size:6.85px;color:#2a2a2a;letter-spacing:0">BIC-Platform-Demo-Overview (Universaldiagramm)</div>
<svg style="left:23.9px;top:476.6px" width="10" height="8" viewBox="0 0 10 8"><path d="M0.9 1.8 Q0.9 0.6 2.1 0.6 H6.4 Q7.2 0.6 7.8 1.6 L9.2 3.6 Q8.6 6 7.6 7.1 Q7.2 7.5 6.4 7.5 H2.1 Q0.9 7.5 0.9 6.3 Z" fill="#f8f8fa" stroke="#8a8c94" stroke-width="0.85"/><path d="M1.2 4.6 Q2 3.5 3.5 3.5 H9" fill="none" stroke="#9a9ea8" stroke-width="0.6"/></svg>
<div class="t" style="left:36.3px;top:477.8px;font-size:6.85px;color:#2a2a2a;letter-spacing:0">Publisher</div>
</div>
<div class="abs" style="left:244px;top:62px;width:9px;height:478px;background:#ececec"></div>
<div class="abs" style="left:245px;top:75px;width:7px;height:445px;background:linear-gradient(90deg,#f4f4f4,#d8d8d8);border:1px solid #c4c4c4;border-radius:2px"></div>
<div class="abs" style="left:20px;top:540px;width:224px;height:11px;background:#ececec"></div>
<div class="abs" style="left:31px;top:541px;width:186px;height:9px;background:linear-gradient(#f4f4f4,#d4d4d4);border:1px solid #c4c4c4;border-radius:2px"></div>
<div class="abs" style="left:244px;top:540px;width:9px;height:11px;background:#d4d4d4"></div>
<div class="abs" style="left:257px;top:32px;width:550px;height:521px;border:1px solid #a0aab4;background:#c8c8c8"></div>
<div class="abs" style="left:258px;top:45px;width:548px;height:1px;background:#a8b4c0"></div>
<div class="abs" style="left:258px;top:46px;width:538px;height:496px;background:#fff"></div>
<div class="abs" style="left:614px;top:33px;width:84px;height:12px;background:linear-gradient(#eef2f7,#c6d8ea)"></div>
<svg style="left:260px;top:35px" width="10" height="9" viewBox="0 0 10 9"><circle cx="2.6" cy="2.1" r="2.4" fill="#1f4f8a"/><circle cx="8.3" cy="2.2" r="1.5" fill="#1f4f8a"/><circle cx="2.8" cy="7.4" r="1.6" fill="#1f4f8a"/><circle cx="8.3" cy="6.9" r="2.1" fill="#1f4f8a"/></svg>
<div class="t" style="left:273px;top:36.5px;font-size:6.75px;color:#333;-webkit-text-stroke-width:0.06px">BIC-Platform-Demo...</div>
<svg style="left:355.6px;top:35px" width="10" height="9" viewBox="0 0 10 9"><circle cx="2.6" cy="2.1" r="2.4" fill="#1f4f8a"/><circle cx="8.3" cy="2.2" r="1.5" fill="#1f4f8a"/><circle cx="2.8" cy="7.4" r="1.6" fill="#1f4f8a"/><circle cx="8.3" cy="6.9" r="2.1" fill="#1f4f8a"/></svg>
<div class="t" style="left:369.3px;top:36.5px;font-size:6.75px;color:#333;-webkit-text-stroke-width:0.06px">Overview Process ...</div>
<svg style="left:446px;top:35px" width="10" height="9" viewBox="0 0 10 9"><circle cx="2.6" cy="2.1" r="2.4" fill="#1f4f8a"/><circle cx="8.3" cy="2.2" r="1.5" fill="#1f4f8a"/><circle cx="2.8" cy="7.4" r="1.6" fill="#1f4f8a"/><circle cx="8.3" cy="6.9" r="2.1" fill="#1f4f8a"/></svg>
<div class="t" style="left:459px;top:36.5px;font-size:6.75px;color:#333;-webkit-text-stroke-width:0.06px">*Select candidate...</div>
<svg style="left:534px;top:35px" width="10" height="9" viewBox="0 0 10 9"><circle cx="2.6" cy="2.1" r="2.4" fill="#1f4f8a"/><circle cx="8.3" cy="2.2" r="1.5" fill="#1f4f8a"/><circle cx="2.8" cy="7.4" r="1.6" fill="#1f4f8a"/><circle cx="8.3" cy="6.9" r="2.1" fill="#1f4f8a"/></svg>
<div class="t" style="left:546.4px;top:36.5px;font-size:6.75px;color:#333;-webkit-text-stroke-width:0.06px">Sales &amp; Distribu...</div>
<svg style="left:616.4px;top:35px" width="10" height="9" viewBox="0 0 10 9"><circle cx="2.6" cy="2.1" r="2.4" fill="#1f4f8a"/><circle cx="8.3" cy="2.2" r="1.5" fill="#1f4f8a"/><circle cx="2.8" cy="7.4" r="1.6" fill="#1f4f8a"/><circle cx="8.3" cy="6.9" r="2.1" fill="#1f4f8a"/></svg>
<div class="t" style="left:629.5px;top:36.5px;font-size:6.75px;color:#333;-webkit-text-stroke-width:0.06px">*03 Acquisition (...</div>
<div class="abs" style="left:352.5px;top:34px;width:1px;height:11px;background:#a8a8a8"></div>
<div class="abs" style="left:443px;top:34px;width:1px;height:11px;background:#a8a8a8"></div>
<div class="abs" style="left:530.5px;top:34px;width:1px;height:11px;background:#a8a8a8"></div>
<div class="abs" style="left:614px;top:34px;width:1px;height:11px;background:#a8a8a8"></div>
<div class="abs" style="left:796px;top:46px;width:10px;height:496px;background:#ececec"></div>
<div class="abs" style="left:797px;top:58px;width:8px;height:71px;background:linear-gradient(90deg,#f4f4f4,#d4d4d4);border:1px solid #c4c4c4;border-radius:2px"></div>
<div class="abs" style="left:258px;top:542px;width:538px;height:10px;background:#ececec"></div>
<div class="abs" style="left:270px;top:542.5px;width:390px;height:8.5px;background:linear-gradient(#f6f6f6,#d2d2d2);border:1px solid #c4c4c4;border-radius:2px"></div>
<div class="abs" style="left:796px;top:542px;width:10px;height:10px;background:#d0d0d0"></div>
<div class="abs" style="left:809px;top:32px;width:150px;height:431px;border:1px solid #a0a0a0;background:#c6c6c6"></div><div class="abs" style="left:810px;top:62px;width:148px;height:1px;background:#a4a4a4"></div>
<div class="abs" style="left:865px;top:33px;width:70px;height:12px;background:linear-gradient(#f8f8f8,#cbcbcb);border-left:1px solid #a0a0a0;border-right:1px solid #a0a0a0"></div>
<div class="abs" style="left:810px;top:45px;width:55px;height:1px;background:#a0a0a0"></div><div class="abs" style="left:935px;top:45px;width:23px;height:1px;background:#a0a0a0"></div>
<div class="t" style="left:824.7px;top:36.5px;font-size:6.8px;color:#333;-webkit-text-stroke-width:0.06px">Eigenschaf...</div>
<div class="t" style="left:881.6px;top:36.5px;font-size:6.9px;color:#333;-webkit-text-stroke-width:0.06px">Symbolpal...</div>
<div class="abs" style="left:811px;top:63px;width:135px;height:399px;background:#fff"></div>
<div class="abs" style="left:946px;top:63px;width:10px;height:399px;background:#ececec"></div>
<div class="abs" style="left:947px;top:75px;width:8px;height:309px;background:linear-gradient(90deg,#f4f4f4,#d4d4d4);border:1px solid #c4c4c4;border-radius:2px"></div>
<div class="abs" style="left:813px;top:64.9px;width:132.5px;height:154.6px;border:1px solid #d4d4d4;background:#fff"></div>
<div class="abs" style="left:813px;top:65.4px;width:132px;height:13.599999999999994px;background:#c6c6c6"></div>
<div class="t" style="left:816.6px;top:69.3px;font-size:6.7px;color:#2a2a2a">Prozess</div>
<div class="abs" style="left:813px;top:222.3px;width:132.5px;height:60.19999999999999px;border:1px solid #d4d4d4;background:#fff"></div>
<div class="abs" style="left:813px;top:222.8px;width:132px;height:12.899999999999977px;background:#c6c6c6"></div>
<div class="t" style="left:816.6px;top:226.3px;font-size:6.7px;color:#2a2a2a">Organisation</div>
<div class="abs" style="left:813px;top:284.9px;width:132.5px;height:60.30000000000001px;border:1px solid #d4d4d4;background:#fff"></div>
<div class="abs" style="left:813px;top:285.4px;width:132px;height:13.600000000000023px;background:#c6c6c6"></div>
<div class="t" style="left:816.6px;top:289.3px;font-size:6.7px;color:#2a2a2a">Daten</div>
<div class="abs" style="left:813px;top:348.1px;width:132.5px;height:113.39999999999998px;border:1px solid #d4d4d4;background:#fff"></div>
<div class="abs" style="left:813px;top:348.6px;width:132px;height:13.399999999999977px;background:#c6c6c6"></div>
<div class="t" style="left:816.6px;top:352.4px;font-size:6.7px;color:#2a2a2a">Verschiedenes</div>
<div class="t" style="left:835.4px;top:85.6px;font-size:6.6px;color:#2a2a2a">Ereignis</div>
<div class="t" style="left:835.4px;top:104.6px;font-size:6.6px;color:#2a2a2a">Funktion</div>
<div class="t" style="left:835.4px;top:123.6px;font-size:6.6px;color:#2a2a2a">Funktion</div>
<div class="t" style="left:835.4px;top:141.9px;font-size:6.6px;color:#2a2a2a">ODER</div>
<div class="t" style="left:835.4px;top:160.9px;font-size:6.6px;color:#2a2a2a">UND</div>
<div class="t" style="left:835.4px;top:179.9px;font-size:6.6px;color:#2a2a2a">XOR</div>
<div class="t" style="left:835.4px;top:243.0px;font-size:6.6px;color:#2a2a2a">Organisationseinheit</div>
<div class="t" style="left:835.4px;top:261.9px;font-size:6.6px;color:#2a2a2a">Rolle</div>
<div class="t" style="left:835.4px;top:305.6px;font-size:6.6px;color:#2a2a2a">Dokument</div>
<div class="t" style="left:835.4px;top:324.5px;font-size:6.6px;color:#2a2a2a">Geschäftsobjekt</div>
<div class="t" style="left:835.4px;top:368.8px;font-size:6.6px;color:#2a2a2a">Anwendungssystemtyp</div>
<div class="t" style="left:835.4px;top:388.3px;font-size:6.6px;color:#b0b0b0">Freitext</div>
<div class="t" style="left:835.4px;top:407.3px;font-size:6.6px;color:#b0b0b0">Freitext</div>
<div class="t" style="left:835.4px;top:425.3px;font-size:6.6px;color:#2a2a2a">Kennzahl</div>
<div class="t" style="left:835.4px;top:444.5px;font-size:6.6px;color:#2a2a2a">Kontrolle</div>
<div class="abs" style="left:809px;top:466px;width:150px;height:87px;border:1px solid #9c9c9c;background:#c4c4c4"></div>
<div class="abs" style="left:810px;top:466px;width:79px;height:14px;background:linear-gradient(#f8f8f8,#cbcbcb);border-right:1px solid #a0a0a0"></div>
<div class="t" style="left:825px;top:470px;font-size:6.9px;color:#333;-webkit-text-stroke-width:0.06px">Modellnavigator</div>
<div class="abs" style="left:810px;top:480px;width:148px;height:72px;background:#fff"></div>
<div class="abs" style="left:875px;top:481px;width:12px;height:9px;background:#6a6af0;border:1px solid #4040c0"></div>
<svg style="left:0;top:0" width="960" height="569" viewBox="0 0 960 569"><g transform="translate(20,34.8)"><circle cx="2.6" cy="2.1" r="2.4" fill="#1f4f8a"/><circle cx="8.3" cy="2.2" r="1.5" fill="#1f4f8a"/><circle cx="2.8" cy="7.4" r="1.6" fill="#1f4f8a"/><circle cx="8.3" cy="6.9" r="2.1" fill="#1f4f8a"/></g><g stroke="#9a9a9a" stroke-width="0.7" fill="none"><path d="M93.3 37 L98.3 42 M98.3 37 L93.3 42"/><rect x="93.3" y="37" width="5" height="5" stroke-dasharray="1 1"/></g><rect x="235.3" y="34.8" width="5.6" height="2.3" rx="1" fill="#ececec" stroke="#8c8c8c" stroke-width="0.6"/><rect x="245.8" y="35.8" width="5.3" height="4.8" rx="0.6" fill="#fbfbfb" stroke="#8c8c8c" stroke-width="0.6"/><rect x="787.4" y="34.8" width="5.6" height="2.3" rx="1" fill="#ececec" stroke="#8c8c8c" stroke-width="0.6"/><rect x="797.9" y="35.8" width="5.3" height="4.8" rx="0.6" fill="#fbfbfb" stroke="#8c8c8c" stroke-width="0.6"/><rect x="939" y="34.8" width="5.6" height="2.3" rx="1" fill="#ececec" stroke="#8c8c8c" stroke-width="0.6"/><rect x="949.5" y="35.8" width="5.3" height="4.8" rx="0.6" fill="#fbfbfb" stroke="#8c8c8c" stroke-width="0.6"/><rect x="939" y="468" width="5.6" height="2.3" rx="1" fill="#ececec" stroke="#8c8c8c" stroke-width="0.6"/><rect x="949.5" y="469" width="5.3" height="4.8" rx="0.6" fill="#fbfbfb" stroke="#8c8c8c" stroke-width="0.6"/><g transform="translate(163,50)"><g transform="scale(0.95)"><circle cx="2.6" cy="2.1" r="2.4" fill="#6a8cc8"/><circle cx="8.3" cy="2.2" r="1.5" fill="#6a8cc8"/><circle cx="2.8" cy="7.4" r="1.6" fill="#6a8cc8"/><circle cx="8.3" cy="6.9" r="2.1" fill="#6a8cc8"/></g></g><path d="M179 54 Q179 52 181 52 H184 L185 53 H188 V59.5 H179 Z" fill="#7a98d0"/><path d="M180 56 H189.5 L188 59.5 H179 Z" fill="#6a88c8"/><path d="M187 50.5 l1 1 1-1 -1 2z" fill="#fff"/><rect x="194.3" y="52" width="9" height="7.6" rx="1" fill="#b8c8e4" stroke="#8aa0c8" stroke-width="0.6"/><path d="M200.5 49.5 l1.2 1.2 1.2 -1.2 -1.2 2.4z" fill="#6a88c8"/><path d="M208.5 48.5 V61" stroke="#999" stroke-width="0.7"/><rect x="212.3" y="48" width="15.2" height="13" rx="1.2" fill="#c0c0c0" stroke="#606060" stroke-width="0.9"/><path d="M215 52.5 H224 M215 56.5 H224" stroke="#7a98d0" stroke-width="1.2"/><path d="M215 52.5 l2 -1.6 v3.2z M224 56.5 l-2 -1.6 v3.2z" fill="#7a98d0"/><rect x="231" y="50.5" width="8.7" height="9" rx="0.8" fill="#c8d0e0" stroke="#8a9cc0" stroke-width="0.8"/><path d="M233 55 H238" stroke="#8a9cc0" stroke-width="0.8"/><rect x="232.5" y="49" width="7" height="2" fill="none" stroke="#8a9cc0" stroke-width="0.5"/><path d="M246.5 49.5 H252 L249.25 52.3 Z" fill="#fff" stroke="#999" stroke-width="0.5"/><path d="M246.5 71 H250.5 L248.5 68.5 Z" fill="#333"/><path d="M246.5 534 H250.5 L248.5 536.5 Z" fill="#333"/><path d="M24.5 545.5 L27 543.5 V547.5 Z" fill="#333"/><path d="M239.5 545.5 L237 543.5 V547.5 Z" fill="#333"/><path d="M122 543.5 V547.5 M123.5 543.5 V547.5 M125 543.5 V547.5" stroke="#888" stroke-width="0.5"/><path d="M246.5 290 H250.5 M246.5 291.5 H250.5 M246.5 293 H250.5" stroke="#888" stroke-width="0.5"/><path d="M798.5 54 H802.5 L800.5 51.5 Z" fill="#333"/><path d="M798.5 535 H802.5 L800.5 537.5 Z" fill="#333"/><path d="M263 546.5 L265.5 544.5 V548.5 Z" fill="#333"/><path d="M793 546.5 L790.5 544.5 V548.5 Z" fill="#333"/><path d="M464 544.5 V548.5 M465.5 544.5 V548.5 M467 544.5 V548.5" stroke="#888" stroke-width="0.5"/><path d="M798.5 91.5 H802.5 M798.5 93 H802.5 M798.5 94.5 H802.5" stroke="#888" stroke-width="0.5"/><g stroke="#9a9a9a" stroke-width="0.7" fill="none"><path d="M688.3 37.5 L693.3 42.5 M693.3 37.5 L688.3 42.5"/><rect x="688.3" y="37.5" width="5" height="5" stroke-dasharray="1 1"/></g><text x="702.5" y="43.5" font-size="6.5" fill="#333" font-family="Liberation Sans">1</text><text x="700.5" y="38.5" font-size="5" font-weight="bold" fill="#333" font-family="Liberation Sans">»</text><rect x="811.5" y="35.5" width="10" height="8" fill="#a8b8d8" stroke="#7088b8" stroke-width="0.6"/><path d="M811.5 37.5 H821.5" stroke="#5a78b0" stroke-width="1.2"/><path d="M814 39.5 V43 M817 39.5 V43 M814 41 H821" stroke="#d0dcf0" stroke-width="0.5"/><rect x="868.5" y="34.3" width="3" height="2.6" fill="#1f4f8a"/><rect x="868.5" y="37.8" width="3" height="2.6" fill="#1f4f8a"/><path d="M868.5 44.2 L871.5 41.3 V44.2 Z" fill="#1f4f8a"/><path d="M873 35.6 H878.3 M873 39.1 H878.3 M873 42.8 H878.3" stroke="#1f3f6a" stroke-width="1.2"/><g stroke="#9a9a9a" stroke-width="0.7" fill="none"><path d="M924.8 37.5 L929.8 42.5 M929.8 37.5 L924.8 42.5"/><rect x="924.8" y="37.5" width="5" height="5" stroke-dasharray="1 1"/></g><path d="M823 57 L827 52 L830.5 55.5" stroke="#9aaad0" stroke-width="1" fill="none"/><path d="M831 50 l1 1 1-1 -1 2z" fill="#7a98d0"/><rect x="830.5" y="56.5" width="3.5" height="3.3" fill="#7a98d0"/><circle cx="841" cy="51.8" r="2.4" fill="#6a88c8"/><path d="M841 54 V59.8" stroke="#6a88c8" stroke-width="1"/><circle cx="841" cy="59" r="1" fill="#6a88c8"/><path d="M844.5 54.5 L849.8 59.5 M849.8 54.5 L844.5 59.5" stroke="#6a88c8" stroke-width="1.4"/><path d="M854 53.2 H858.3 L856.15 55.5 Z" fill="#111"/><rect x="862.4" y="50" width="10.4" height="9" fill="#c8d0e0" stroke="#8a9cc0" stroke-width="0.8"/><path d="M864.5 57 L866.5 52 L868.5 57 M869.5 53 H871.5 M869.5 55 H871.5" stroke="#8a9cc0" stroke-width="0.7" fill="none"/><rect x="877.7" y="51" width="6" height="7" fill="none" stroke="#8a9cc0" stroke-width="0.8"/><rect x="882" y="50" width="7" height="5.5" fill="#6a88c8"/><path d="M878 58 L884 52" stroke="#8a9cc0" stroke-width="0.6"/><path d="M893.9 53.2 H898 L896 55.5 Z" fill="#111"/><path d="M903 56 L908 50.5 L912 53.5 L907 59 Z" fill="none" stroke="#a8b4d0" stroke-width="0.9"/><path d="M905 49.5 V53" stroke="#a8b4d0" stroke-width="0.6"/><path d="M917.5 59.5 L927.5 50" stroke="#8898c0" stroke-width="1"/><rect x="933.4" y="51.7" width="10.6" height="6.5" fill="#6a88c8"/><path d="M949.6 50 H954.4 L952 52.6 Z" fill="#fff" stroke="#999" stroke-width="0.5"/><path d="M949 71.5 H953 L951 69 Z" fill="#333"/><path d="M949 455 H953 L951 457.5 Z" fill="#333"/><path d="M949 228 H953 M949 229.5 H953 M949 231 H953" stroke="#888" stroke-width="0.5"/><path d="M937 72.5 L939 70.5 L941 72.5 M937 74.5 L939 72.5 L941 74.5" stroke="#222" stroke-width="0.9" fill="none"/><path d="M937 229.5 L939 227.5 L941 229.5 M937 231.5 L939 229.5 L941 231.5" stroke="#222" stroke-width="0.9" fill="none"/><path d="M937 292.5 L939 290.5 L941 292.5 M937 294.5 L939 292.5 L941 294.5" stroke="#222" stroke-width="0.9" fill="none"/><path d="M937 355.5 L939 353.5 L941 355.5 M937 357.5 L939 355.5 L941 357.5" stroke="#222" stroke-width="0.9" fill="none"/><rect x="816.8" y="84.8" width="14.9" height="6.4" rx="1.5" fill="#f8d4b4" stroke="#e0b090" stroke-width="0.6"/><path d="M822.5 88 H826" stroke="#b08060" stroke-width="0.4"/><rect x="816.8" y="103.2" width="14.9" height="6.8" fill="#c8ecd0" stroke="#88c098" stroke-width="0.6"/><path d="M822.5 106.5 H826" stroke="#70a080" stroke-width="0.4"/><rect x="816.8" y="121.6" width="14.9" height="6.8" rx="1" fill="#f0f0f0" stroke="#bbb" stroke-width="0.6"/><path d="M822.5 125 H826" stroke="#888" stroke-width="0.4"/><circle cx="824" cy="143.8" r="7.2" fill="#f0f0f0" stroke="#c8c8c8" stroke-width="0.7"/><text x="824" y="144.8" font-size="2.6" fill="#444" text-anchor="middle" font-family="Liberation Sans">OR</text><circle cx="824" cy="162.8" r="7.2" fill="#f0f0f0" stroke="#c8c8c8" stroke-width="0.7"/><text x="824" y="163.8" font-size="2.6" fill="#444" text-anchor="middle" font-family="Liberation Sans">AND</text><circle cx="824" cy="181.5" r="7.2" fill="#f0f0f0" stroke="#c8c8c8" stroke-width="0.7"/><text x="824" y="182.5" font-size="2.6" fill="#444" text-anchor="middle" font-family="Liberation Sans">XOR</text><rect x="816.4" y="242.7" width="15.3" height="5.1" rx="0.8" fill="#fafab0" stroke="#d8d060" stroke-width="0.7"/><path d="M819 245.2 H829" stroke="#c8c070" stroke-width="0.4"/><rect x="816.4" y="260.8" width="15.3" height="5.6" fill="#f8f490" stroke="#d8d060" stroke-width="0.6"/><path d="M822 263.6 H827" stroke="#555" stroke-width="0.6"/><rect x="817" y="261.2" width="2" height="2" fill="#d8c040"/><rect x="816.4" y="305" width="15.3" height="4.8" fill="#f2f0e4" stroke="#c8c4b0" stroke-width="0.6"/><path d="M822 307.4 H827" stroke="#555" stroke-width="0.6"/><rect x="816.4" y="323.6" width="15.3" height="4.6" fill="#f0ece0" stroke="#c8c4b0" stroke-width="0.6"/><path d="M822 325.9 H827" stroke="#888" stroke-width="0.5"/><rect x="816.4" y="368" width="15.3" height="4.8" fill="#a8b8ec" stroke="#8898d0" stroke-width="0.6"/><path d="M816.3 386 H830 L831.8 387.8 V393.4 H816.3 Z" fill="#fafae4" stroke="#666" stroke-width="0.8"/><path d="M823 389.6 H825" stroke="#b0a060" stroke-width="0.6"/><path d="M823 409 H824.5" stroke="#888" stroke-width="0.6"/><circle cx="824.1" cy="427.3" r="7.6" fill="#eee8d2" stroke="#ddd4b8" stroke-width="0.6"/><rect x="819.3" y="427" width="2.6" height="4" fill="#c4ac68"/><rect x="822" y="425" width="2.6" height="6" fill="#c8b070"/><rect x="824.7" y="423" width="2.6" height="8" fill="#c4ac68"/><defs><radialGradient id="gK" cx="0.4" cy="0.3" r="0.8"><stop offset="0" stop-color="#9ad8a8"/><stop offset="1" stop-color="#48a060"/></radialGradient></defs><circle cx="824.1" cy="446.4" r="7.7" fill="url(#gK)" stroke="#5a9a6a" stroke-width="0.6"/><path d="M819.5 446.5 L822.5 450.5 L828.5 442" stroke="#f4fff4" stroke-width="1.2" fill="none"/><path d="M820 447.5 L822.5 450.5" stroke="#2a6a3a" stroke-width="0.5"/><rect x="812" y="468.5" width="10" height="9.5" rx="1" fill="#4a78b8" stroke="#2a5898" stroke-width="0.6"/><rect x="815.5" y="473" width="6" height="5" fill="#e0e8f4" stroke="#2a5898" stroke-width="0.5"/><g stroke="#9a9a9a" stroke-width="0.7" fill="none"><path d="M880.5 470.5 L885.5 475.5 M885.5 470.5 L880.5 475.5"/><rect x="880.5" y="470.5" width="5" height="5" stroke-dasharray="1 1"/></g><rect x="874.75" y="480.5" width="11.75" height="9.9" fill="#6e6ee8" stroke="#5050d0" stroke-width="0.5"/><g stroke="#3a3a3a" stroke-width="0.6" fill="none"><path d="M881 490.5 V494 H887 V497"/><path d="M880 508 H888 V513 M881 516 H889 V527 H886"/><path d="M878 536.5 H890 V549 H886"/></g><g fill="#e4e090" opacity="0.95"><rect x="879.5" y="493" width="4" height="2.5"/><rect x="880" y="498" width="5" height="2.5"/><rect x="881" y="503" width="4" height="3"/><rect x="879" y="509" width="6" height="2.5"/><rect x="880" y="513" width="5" height="2.5"/><rect x="879.5" y="518" width="6" height="2.5"/><rect x="880" y="522" width="4" height="3"/><rect x="880" y="530" width="5" height="2.5"/><rect x="879.5" y="534" width="5" height="2"/><rect x="878" y="538" width="7" height="3"/><rect x="880" y="543" width="5" height="2.5"/><rect x="883" y="547" width="4" height="3"/></g><g fill="#b8d890"><rect x="881" y="500" width="3" height="1.5"/><rect x="880" y="520" width="3" height="1.5"/><rect x="880" y="540" width="4" height="1.5"/></g><rect x="881" y="524" width="4" height="1.5" fill="#553"/><rect x="881" y="544" width="3" height="1.5" fill="#e0a880"/><rect x="636" y="555.5" width="14" height="12.5" rx="1" fill="#d8d8d8" stroke="#aaa" stroke-width="0.6"/><rect x="638.5" y="558.5" width="9" height="6" fill="#3a4a9a"/><path d="M638.5 558.5 L647.5 564.5 M647.5 558.5 L638.5 564.5" stroke="#fff" stroke-width="1"/><path d="M638.5 558.5 L647.5 564.5 M647.5 558.5 L638.5 564.5" stroke="#d03040" stroke-width="0.4"/><path d="M643 558.5 V564.5 M638.5 561.5 H647.5" stroke="#fff" stroke-width="1.6"/><path d="M643 558.5 V564.5 M638.5 561.5 H647.5" stroke="#d03040" stroke-width="0.9"/><path d="M875 555 V569" stroke="#e4e4e4" stroke-dasharray="1 1" stroke-width="0.8"/><path d="M2 36.3 H16" stroke="#e8e8e8" stroke-width="0.8" stroke-dasharray="1 1"/><rect x="4.5" y="44.5" width="3" height="6.5" fill="#fff" stroke="#bbb" stroke-width="0.4"/><rect x="4" y="44" width="4" height="1.5" fill="#4a68a8"/><circle cx="9.8" cy="45" r="1.3" fill="#e8d070"/><path d="M3 79 H15" stroke="#e8e8e8" stroke-width="0.8" stroke-dasharray="1 1"/><rect x="6.5" y="88.5" width="4" height="3" fill="none" stroke="#777" stroke-width="0.6"/><rect x="7.5" y="87.5" width="4" height="3" fill="#ddd" stroke="#777" stroke-width="0.6"/><path d="M10 566 Q14 563.5 18 566 V569 H10 Z" fill="#b8c8d8" stroke="#7890a8" stroke-width="0.6"/></svg>
<div class="t" style="left:656.7px;top:559px;font-size:6.8px;color:#333">1 Objekt(e) ausgewählt</div>
<div class="abs" style="left:258px;top:46px;width:538px;height:496px;overflow:hidden">
<div class="abs" style="left:-258px;top:-46px;width:960px;height:569px"><svg style="left:0;top:0" width="960" height="569" viewBox="0 0 960 569"><defs>
<linearGradient id="gEv" x1="0" y1="0" x2="0" y2="1"><stop offset="0" stop-color="#fbe8d8"/><stop offset="1" stop-color="#f6cba4"/></linearGradient>
<linearGradient id="gFn" x1="0" y1="0" x2="0" y2="1"><stop offset="0" stop-color="#dcefe0"/><stop offset="1" stop-color="#b6dbbf"/></linearGradient>
<linearGradient id="gGr" x1="0" y1="0" x2="0" y2="1"><stop offset="0" stop-color="#fafafa"/><stop offset="1" stop-color="#e2e2e2"/></linearGradient>
<linearGradient id="gDoc" x1="0" y1="0" x2="0" y2="1"><stop offset="0" stop-color="#f4f1e6"/><stop offset="1" stop-color="#e2dcc8"/></linearGradient>
<linearGradient id="gYel" x1="0" y1="0" x2="0" y2="1"><stop offset="0" stop-color="#ffffc0"/><stop offset="1" stop-color="#f8f47c"/></linearGradient>
<radialGradient id="gCir" cx="0.4" cy="0.35" r="0.7"><stop offset="0" stop-color="#fbfbfb"/><stop offset="1" stop-color="#e0e0e0"/></radialGradient>
</defs><g font-family="Liberation Sans, sans-serif" font-size="7" fill="#333" text-anchor="middle" letter-spacing="0.15"><path d="M488.4 74.8 L556.7 74.8 L561.7 91 L556.7 107.5 L488.4 107.5 Z" fill="url(#gGr)" stroke="#c4c4c4" stroke-width="1"/><rect x="478.4" y="69.3" width="72.30000000000007" height="33.4" fill="url(#gGr)" stroke="#c4c4c4" stroke-width="1"/><text x="520.4" y="91" >Marketing</text><rect x="539.5" y="90" width="6" height="4.5" fill="#c8f0c0" stroke="#7cc070" stroke-width="0.6"/><rect x="536.0" y="95.9" width="6.5" height="4.2" rx="0.8" fill="#f8cc9c" stroke="#eab080" stroke-width="0.4"/><rect x="542.5" y="95.9" width="6.5" height="4.2" rx="0.8" fill="#f8cc9c" stroke="#eab080" stroke-width="0.4"/><rect x="543.2" y="72.4" width="1.6" height="1.4" fill="#a8a8a8"/><rect x="543.2" y="74.8" width="1.6" height="5.3" fill="#a8a8a8"/><path d="M598.6 74.8 L666.6 74.8 L671.6 91 L666.6 107.5 L598.6 107.5 Z" fill="url(#gGr)" stroke="#c4c4c4" stroke-width="1"/><rect x="588.6" y="69.3" width="72.0" height="33.4" fill="url(#gGr)" stroke="#c4c4c4" stroke-width="1"/><text x="628.6" y="86.4">Telephone</text><text x="628.6" y="95.2">acquisition</text><rect x="649.4" y="90" width="6" height="4.5" fill="#c8f0c0" stroke="#7cc070" stroke-width="0.6"/><rect x="645.9" y="95.9" width="6.5" height="4.2" rx="0.8" fill="#f8cc9c" stroke="#eab080" stroke-width="0.4"/><rect x="652.4" y="95.9" width="6.5" height="4.2" rx="0.8" fill="#f8cc9c" stroke="#eab080" stroke-width="0.4"/><rect x="653.1" y="72.4" width="1.6" height="1.4" fill="#a8a8a8"/><rect x="653.1" y="74.8" width="1.6" height="5.3" fill="#a8a8a8"/><path d="M478.4 141.65 L484.4 122.3 L555.7 122.3 L561.7 141.65 L555.7 161 L484.4 161 Z" fill="url(#gEv)" stroke="#e9b98e" stroke-width="1"/><text x="520" y="139.7" >Marketing activities</text><text x="520" y="149.4" >are evaluated</text><path d="M588.6 141.5 L594.6 122.2 L665 122.2 L671 141.5 L665 160.8 L594.6 160.8 Z" fill="url(#gEv)" stroke="#e9b98e" stroke-width="1"/><text x="629.5" y="135.0" >Customer</text><text x="629.5" y="144.9" >assigned to</text><text x="629.5" y="154.0" >sales</text><path d="M698.5 141.5 L704.5 122.2 L775.1 122.2 L781.1 141.5 L775.1 160.8 L704.5 160.8 Z" fill="url(#gEv)" stroke="#e9b98e" stroke-width="1"/><text x="738.6" y="135.0" >Company</text><text x="738.6" y="144.9" >presentation</text><text x="738.6" y="154.0" >required</text><path d="M520 102.7 V114" stroke="#222" stroke-width="1" fill="none"/><path d="M516.5 113.8 L523.5 113.8 L520 122.3 Z" fill="#111"/><path d="M629.5 102.3 V114" stroke="#222" stroke-width="1" fill="none"/><path d="M626.0 113.7 L633.0 113.7 L629.5 122.2 Z" fill="#111"/><path d="M520 161 V168" stroke="#222" stroke-width="1" fill="none"/><path d="M516.5 168.3 L523.5 168.3 L520 176.8 Z" fill="#111"/><circle cx="520" cy="190.8" r="13.7" fill="url(#gCir)" stroke="#c8c8c8" stroke-width="1"/><text x="520" y="193.4">OR</text><path d="M629.5 160.8 V187.5 Q629.5 190.5 626.5 190.5 H542 M739.8 160.8 V187.5 Q739.8 190.5 736.8 190.5 H629" stroke="#333" stroke-width="1" fill="none"/><path d="M542.6 187.0 L542.6 194.0 L534.1 190.5 Z" fill="#111"/><path d="M520 204.5 V293" stroke="#222" stroke-width="1" fill="none"/><path d="M516.5 293.3 L523.5 293.3 L520 301.8 Z" fill="#111"/><rect x="566.7" y="219.4" width="83" height="28" fill="url(#gGr)" stroke="#c4c4c4" stroke-width="1"/><text x="607.5" y="235.5">Customer</text><text x="576.8" y="243.6" font-size="4" font-style="italic" letter-spacing="0.5" fill="#222">EXT</text><g fill="none" stroke="#c8c8c8" stroke-width="0.8"><circle cx="574.5" cy="225.3" r="2.6"/><path d="M570.6 232 Q570.6 228.3 574.5 228.3 Q578.4 228.3 578.4 232 Z"/></g><path d="M607.8 247.4 V268.3" stroke="#555" stroke-width="1"/><text x="603.3" y="254.8" font-size="6.5" font-weight="bold" fill="#222">c</text><rect x="566.7" y="268.3" width="83" height="28.3" fill="url(#gYel)" stroke="#d8d050" stroke-width="1"/><g fill="none" stroke="#d8d060" stroke-width="0.8"><circle cx="574.5" cy="274" r="2.6"/><path d="M570.6 281 Q570.6 277 574.5 277 Q578.4 277 578.4 281 Z"/></g><text x="608" y="280.2" >Employee</text><text x="608" y="290.0" >Sales/Marketing</text><text x="603.3" y="304.2" font-size="6.5" font-weight="bold" fill="#222">e</text><path d="M607.8 296.6 V308 Q607.8 311 604.8 311 H561.6" stroke="#555" stroke-width="1" fill="none"/><rect x="478.6" y="301.8" width="83" height="38.2" fill="url(#gFn)" stroke="#88c49a" stroke-width="1"/><text x="519" y="313.5" >Prepare and</text><text x="519" y="324.0" >carry out</text><text x="519" y="333.1" >presentation</text><rect x="554.5" y="304.8" width="1.6" height="1.4" fill="#58b068"/><rect x="554.5" y="307" width="1.6" height="6" fill="#58b068"/><path d="M561.6 330.6 H604.8 Q607.8 330.6 607.8 333.6 V337" stroke="#333" stroke-width="1" fill="none"/><path d="M603.8 336.7 L611.8 336.7 L607.8 345 Z" fill="#fff" stroke="#333" stroke-width="1"/><path d="M328 345.4 V333 Q328 330 331 330 H470.6 M431.5 345.4 V333 Q431.5 330 434.5 330" stroke="#333" stroke-width="1" fill="none"/><path d="M470.6 326 L478.6 330 L470.6 334 Z" fill="#fff" stroke="#333" stroke-width="1"/><rect x="286.25" y="345.4" width="83" height="28.35" fill="url(#gDoc)" stroke="#cfc8b0" stroke-width="1"/><path d="M290.25 348.4 h6 l2.5 2.5 v8 h-8.5 Z" fill="#f8f6f0" stroke="#d8d2c0" stroke-width="0.7"/><rect x="390.4" y="345.4" width="83" height="28.35" fill="url(#gDoc)" stroke="#cfc8b0" stroke-width="1"/><path d="M394.4 348.4 h6 l2.5 2.5 v8 h-8.5 Z" fill="#f8f6f0" stroke="#d8d2c0" stroke-width="0.7"/><rect x="566.7" y="345.4" width="83" height="28.35" fill="url(#gDoc)" stroke="#cfc8b0" stroke-width="1"/><path d="M570.7 348.4 h6 l2.5 2.5 v8 h-8.5 Z" fill="#f8f6f0" stroke="#d8d2c0" stroke-width="0.7"/><rect x="390.4" y="394.6" width="83" height="28.1" fill="url(#gDoc)" stroke="#cfc8b0" stroke-width="1"/><path d="M394.4 397.6 h6 l2.5 2.5 v8 h-8.5 Z" fill="#f8f6f0" stroke="#d8d2c0" stroke-width="0.7"/><text x="327.5" y="357.3" >Information</text><text x="327.5" y="366.9" >on customer</text><text x="431.5" y="357.3" fill="#2020c8" text-decoration="underline">Corporate </text><text x="431.5" y="366.9" fill="#2020c8" text-decoration="underline">presentation - BIC</text><text x="607.8" y="357.3" >Customized</text><text x="607.8" y="366.9" >presentation</text><path d="M431.5 373.75 V394.6" stroke="#333" stroke-width="1"/><text x="431.5" y="401.7" >Presentation</text><text x="431.5" y="411.5" >slides</text><text x="431.5" y="420.5" >(template)</text><rect x="466.8" y="397" width="1.5" height="1.3" fill="#c8c4b0"/><rect x="466.8" y="399" width="1.5" height="6" fill="#c8c4b0"/><path d="M520 340 V428" stroke="#222" stroke-width="1" fill="none"/><path d="M516.5 428.7 L523.5 428.7 L520 437.2 Z" fill="#111"/><path d="M478.5 456.29999999999995 L484.5 437.2 L555.7 437.2 L561.7 456.29999999999995 L555.7 475.4 L484.5 475.4 Z" fill="url(#gEv)" stroke="#e9b98e" stroke-width="1"/><text x="520" y="454.5" >Presentation</text><text x="520" y="464.3" >carried out</text><path d="M561.7 456.4 H601" stroke="#555" stroke-width="0.9" stroke-dasharray="1.5 2.5"/><path d="M600.5 452.9 L600.5 459.9 L609 456.4 Z" fill="#111"/><rect x="609.7" y="436.7" width="60" height="38.8" fill="url(#gFn)" stroke="#78b88a" stroke-width="1"/><text x="640" y="459">Fu</text><rect x="642.5" y="437.5" width="82.5" height="38.3" fill="url(#gFn)" stroke="#78b88a" stroke-width="1"/><text x="682.5" y="459" font-size="7.2">Function</text><path d="M469.8 437 H732 M469.8 475.5 H732" stroke="#8888b0" stroke-width="0.8" stroke-dasharray="4 3" opacity="0.8"/><path d="M469.8 456.4 H732" stroke="#e09898" stroke-width="0.8" stroke-dasharray="4 3" opacity="0.7"/><circle cx="609.7" cy="437" r="1.7" fill="#d8e4d8" stroke="#445" stroke-width="0.6"/><circle cx="609.7" cy="475.5" r="1.7" fill="#d8e4d8" stroke="#445" stroke-width="0.6"/><circle cx="650.5" cy="437" r="1.7" fill="#d8e4d8" stroke="#445" stroke-width="0.6"/><circle cx="650.5" cy="475.5" r="1.7" fill="#d8e4d8" stroke="#445" stroke-width="0.6"/><circle cx="691.8" cy="437" r="1.7" fill="#d8e4d8" stroke="#445" stroke-width="0.6"/><circle cx="691.8" cy="475.5" r="1.7" fill="#d8e4d8" stroke="#445" stroke-width="0.6"/><circle cx="609.7" cy="456.4" r="1.7" fill="#d8e4d8" stroke="#445" stroke-width="0.6"/><path d="M520 475.4 V483" stroke="#222" stroke-width="1" fill="none"/><path d="M516.5 482.9 L523.5 482.9 L520 491.4 Z" fill="#111"/><circle cx="519.8" cy="505" r="13.8" fill="url(#gCir)" stroke="#c8c8c8" stroke-width="1"/><text x="519.8" y="507.6">XOR</text><path d="M519.8 518.8 V542" stroke="#333" stroke-width="1"/><path d="M542 505 H784.5 Q787.5 505 787.5 508 V542" stroke="#555" stroke-width="1" fill="none"/><path d="M542.3 501.5 L542.3 508.5 L533.8 505 Z" fill="#111"/><rect x="566.3" y="533.7" width="83" height="12" fill="url(#gGr)" stroke="#c4c4c4" stroke-width="1"/><g fill="none" stroke="#c8c8c8" stroke-width="0.8"><circle cx="574.5" cy="539.5" r="2.6"/></g></g></svg></div>
</div>
</body></html>
